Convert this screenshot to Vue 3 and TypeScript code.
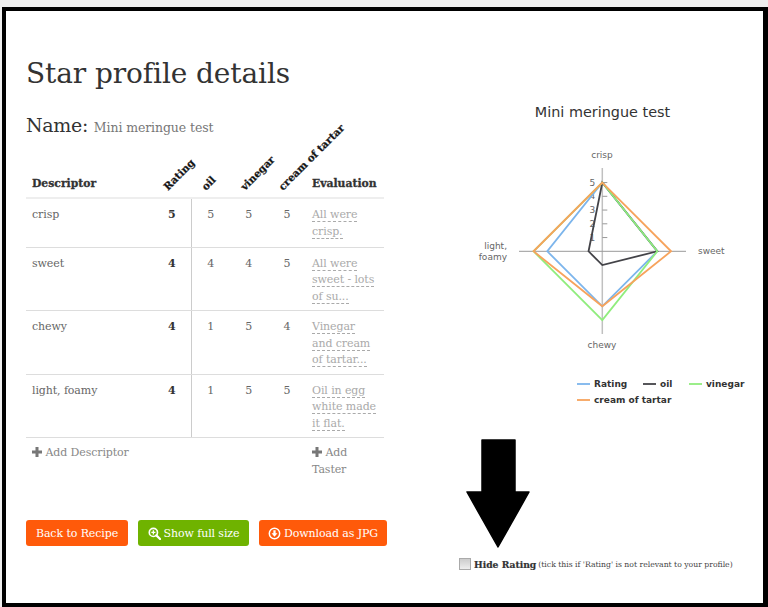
<script setup lang="ts">
interface Row { name: string; r: number; oil: number; vin: number; cream: number; ev: string[]; cls: string }
const rows: Row[] = [
  { name: 'crisp', r: 5, oil: 5, vin: 5, cream: 5, ev: ['All were', 'crisp.'], cls: 'two' },
  { name: 'sweet', r: 4, oil: 4, vin: 4, cream: 5, ev: ['All were', 'sweet - lots', 'of su...'], cls: 'three' },
  { name: 'chewy', r: 4, oil: 1, vin: 5, cream: 4, ev: ['Vinegar', 'and cream', 'of tartar...'], cls: 'three' },
  { name: 'light, foamy', r: 4, oil: 1, vin: 5, cream: 5, ev: ['Oil in egg', 'white made', 'it flat.'], cls: 'three' },
]
const cx = 143.3
const cy = 154.3
const u = 13.75
function poly(v: number[]): string {
  return [
    [cx, cy - v[0] * u],
    [cx + v[1] * u, cy],
    [cx, cy + v[2] * u],
    [cx - v[3] * u, cy],
  ].map(p => p.join(',')).join(' ')
}
const series = [
  { color: '#7cb5ec', pts: poly([5, 4, 4, 4]) },
  { color: '#434348', pts: poly([5, 4, 1, 1]) },
  { color: '#90ed7d', pts: poly([5, 4, 5, 5]) },
  { color: '#f7a35c', pts: poly([5, 5, 4, 5]) },
]
const ticks = [1, 2, 3, 4, 5]
</script>

<template>
  <div class="frame">
    <section class="left">
      <h1 class="title">Star profile details</h1>
      <h2 class="name">Name: <small>Mini meringue test</small></h2>
      <table class="grid">
        <thead>
          <tr>
            <th class="c-desc">Descriptor</th>
            <th class="c-num"><span class="rot">Rating</span></th>
            <th class="c-num"><span class="rot">oil</span></th>
            <th class="c-num"><span class="rot">vinegar</span></th>
            <th class="c-num"><span class="rot">cream of tartar</span></th>
            <th class="c-eval">Evaluation</th>
          </tr>
        </thead>
        <tbody>
          <tr v-for="row in rows" :key="row.name" :class="row.cls">
            <td>{{ row.name }}</td>
            <td class="num bold rule">{{ row.r }}</td>
            <td class="num">{{ row.oil }}</td>
            <td class="num">{{ row.vin }}</td>
            <td class="num">{{ row.cream }}</td>
            <td class="ev"><span v-for="l in row.ev" :key="l" class="ev-line"><span class="dash">{{ l }}</span></span></td>
          </tr>
          <tr class="add">
            <td colspan="5">
              <svg class="plus" viewBox="0 0 10 10"><path d="M3.5 0h3v3.5H10v3H6.5V10h-3V6.5H0v-3h3.5z" /></svg> Add Descriptor
            </td>
            <td>
              <svg class="plus" viewBox="0 0 10 10"><path d="M3.5 0h3v3.5H10v3H6.5V10h-3V6.5H0v-3h3.5z" /></svg> Add Taster
            </td>
          </tr>
        </tbody>
      </table>
      <div class="buttons">
        <button class="btn orange w1">Back to Recipe</button>
        <button class="btn green w2">
          <svg class="ico" viewBox="0 0 14 14"><circle cx="5.8" cy="5.8" r="4.4" fill="none" stroke="#fff" stroke-width="1.8" /><path d="M9 9l4 4" stroke="#fff" stroke-width="2.4" stroke-linecap="round" /><path d="M3.6 5.8h4.4M5.8 3.6v4.4" stroke="#fff" stroke-width="1.4" /></svg>
          Show full size
        </button>
        <button class="btn orange w3">
          <svg class="ico" viewBox="0 0 14 14"><circle cx="7" cy="7" r="5.6" fill="none" stroke="#fff" stroke-width="1.6" /><path d="M5.8 3.4h2.4v3.4h2L7 10.4 3.8 6.8h2z" fill="#fff" /></svg>
          Download as JPG
        </button>
      </div>
    </section>

    <section class="right">
      <svg class="chart" viewBox="0 0 305 320" width="305" height="320">
        <text x="143.5" y="20" class="c-title" text-anchor="middle">Mini meringue test</text>
        <line :x1="cx" y1="71" :x2="cx" y2="237" stroke="#c0c0c0" stroke-width="1.5" />
        <line x1="60" :y1="cy" x2="227" :y2="cy" stroke="#999" stroke-width="1" />
        <line v-for="t in ticks" :key="t" :x1="cx" :y1="cy - t * u" :x2="cx + 5" :y2="cy - t * u" stroke="#999" stroke-width="1" />
        <text v-for="t in ticks" :key="'l' + t" :x="cx - 10" :y="cy - t * u + 3" class="c-axis" text-anchor="middle">{{ t }}</text>
        <polygon v-for="s in series" :key="s.color" :points="s.pts" fill="none" :stroke="s.color" stroke-width="1.8" />
        <text x="143" y="61" class="c-lab" text-anchor="middle">crisp</text>
        <text x="239" y="157" class="c-lab">sweet</text>
        <text x="143" y="251" class="c-lab" text-anchor="middle">chewy</text>
        <text x="48" y="152" class="c-lab" text-anchor="end">light,</text>
        <text x="48" y="163" class="c-lab" text-anchor="end">foamy</text>

        <line x1="118" y1="287" x2="131" y2="287" stroke="#7cb5ec" stroke-width="1.8" />
        <text x="135" y="290" class="c-leg">Rating</text>
        <line x1="184" y1="287" x2="197" y2="287" stroke="#434348" stroke-width="1.8" />
        <text x="201" y="290" class="c-leg">oil</text>
        <line x1="230" y1="287" x2="243" y2="287" stroke="#90ed7d" stroke-width="1.8" />
        <text x="247" y="290" class="c-leg">vinegar</text>
        <line x1="118" y1="303" x2="131" y2="303" stroke="#f7a35c" stroke-width="1.8" />
        <text x="135" y="306" class="c-leg">cream of tartar</text>
      </svg>
      <svg class="arrow" viewBox="0 0 64 110" width="64" height="110">
        <path d="M16 1h33v52h14L32 108 1 53h15z" fill="#000" stroke="#000" stroke-width="1.5" stroke-linejoin="round" />
      </svg>
      <label class="hide">
        <input type="checkbox" class="check" />
        <b>Hide Rating</b> <small>(tick this if 'Rating' is not relevant to your profile)</small>
      </label>
    </section>
  </div>
</template>

<style scoped>
.frame {
  box-sizing: border-box;
  margin: 7px 0 0 2px;
  height: 600px;
  width: 766px;
  background: #fff;
  border: solid #000;
  border-width: 4px 5px 4px 4px;
  display: grid;
  grid-template-columns: 452px 1fr;
  font-family: "DejaVu Serif", "Liberation Serif", serif;
  color: #555;
}
.left {
  padding: 45px 0 0 20px;
  min-width: 0;
}
.title {
  margin: 0;
  font-size: 28px;
  line-height: 36px;
  font-weight: 400;
  letter-spacing: -0.1px;
  color: #333;
}
.name {
  margin: 19px 0 0;
  font-size: 19px;
  line-height: 28px;
  font-weight: 400;
  color: #333;
  letter-spacing: -0.3px;
}
.name small {
  font-size: 12.5px;
  color: #777;
  letter-spacing: -0.1px;
}
.grid {
  margin-top: 26px;
  width: 358px;
  table-layout: fixed;
  border-collapse: collapse;
  font-size: 11px;
}
.c-desc { width: 127px; }
.c-num { width: 38.25px; }
.c-eval { width: 78px; }
th {
  height: 30px;
  padding: 6px 6px 6px;
  box-sizing: border-box;
  text-align: left;
  vertical-align: bottom;
  color: #333;
  font-size: 10.8px;
  font-weight: 700;
  line-height: 14px;
  letter-spacing: 0;
  white-space: nowrap;
  border-bottom: 2px solid #eee;
  -webkit-text-stroke: 0.3px #333;
}
.rot {
  display: inline-block;
  width: 0;
  white-space: nowrap;
  color: #111;
  font-size: 10.3px;
  transform: translate(11px, 3px) rotate(-45deg);
  transform-origin: 0 100%;
}
td {
  padding: 8px 6px 5px;
  vertical-align: top;
  line-height: 16.5px;
  border-bottom: 1px solid #ddd;
  color: #666;
  letter-spacing: -0.1px;
}
tr.two td { height: 49px; box-sizing: border-box; }
.num { text-align: center; }
.bold { font-weight: 700; color: #333; }
.rule { border-right: 1px solid #ccc; }
.ev { color: #aaa; white-space: nowrap; padding-right: 0; }
.ev-line { display: block; }
.dash { border-bottom: 1px dashed #aaa; }
.add td {
  border-bottom: 0;
  color: #888;
  height: 61px;
  padding-top: 7px;
  white-space: normal;
}
.plus {
  width: 10px;
  height: 10px;
  fill: #777;
  vertical-align: -1px;
}
.buttons {
  margin-top: 9px;
  display: flex;
  gap: 10px;
}
.btn {
  height: 26px;
  padding: 0;
  border: 0;
  border-radius: 3px;
  color: #fff;
  font: 400 11px "DejaVu Serif", serif;
  letter-spacing: -0.1px;
  display: flex;
  align-items: center;
  justify-content: center;
  gap: 3px;
  white-space: nowrap;
}
.w1 { width: 102px; }
.w2 { width: 111px; }
.w3 { width: 128px; }
.orange { background: #ff5a0a; }
.green { background: #6fb300; }
.ico { width: 13px; height: 13px; }
.right {
  padding-top: 86px;
  display: flex;
  flex-direction: column;
  align-items: flex-start;
  min-width: 0;
  margin-left: 1px;
}
.chart { display: block; }
.c-title { font: 14.4px "DejaVu Sans", sans-serif; fill: #333; }
.c-lab { font: 9px "DejaVu Sans", sans-serif; fill: #666; }
.c-axis { font: 9px "DejaVu Sans", sans-serif; fill: #666; }
.c-leg { font: 700 9px "DejaVu Sans", sans-serif; fill: #333; }
.arrow { display: block; margin: 22px 0 0 7px; }
.hide {
  margin-top: 9px;
  display: flex;
  align-items: center;
  gap: 2px;
  font-size: 9.2px;
  color: #333;
  white-space: nowrap;
}
.hide b { font-size: 9.2px; margin-left: 1px; -webkit-text-stroke: 0.2px #333; }
.hide small { font-size: 7.7px; color: #444; }
.check {
  appearance: none;
  box-sizing: border-box;
  width: 12px;
  height: 12px;
  margin: 0;
  border: 1px solid #aaa;
  background: linear-gradient(#ccc, #eee);
}
</style>

<style>
html, body { background: #eee; margin: 0; overflow: hidden; }
</style>
